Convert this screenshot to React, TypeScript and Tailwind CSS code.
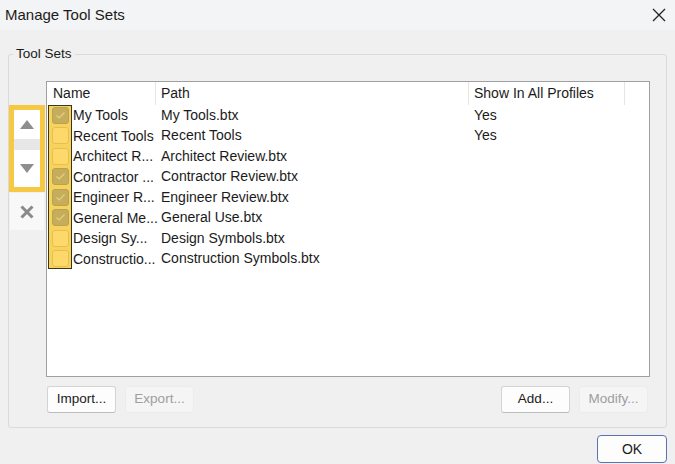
const rows = [
  { name: 'My Tools', path: 'My Tools.btx', show: 'Yes', checked: true },
  { name: 'Recent Tools', path: 'Recent Tools', show: 'Yes', checked: false },
  { name: 'Architect R...', path: 'Architect Review.btx', show: '', checked: false },
  { name: 'Contractor ...', path: 'Contractor Review.btx', show: '', checked: true },
  { name: 'Engineer R...', path: 'Engineer Review.btx', show: '', checked: true },
  { name: 'General Me...', path: 'General Use.btx', show: '', checked: true },
  { name: 'Design Sy...', path: 'Design Symbols.btx', show: '', checked: false },
  { name: 'Constructio...', path: 'Construction Symbols.btx', show: '', checked: false },
]

function Check({ checked }: { checked: boolean }) {
  if (checked) {
    return (
      <div className="w-[17px] h-[17px] rounded-[3px] bg-[#c5ad5c] border border-[#b9a153] flex items-center justify-center">
        <svg width="11" height="9" viewBox="0 0 11 9">
          <path d="M1.5 4.5 L4.2 7 L9.5 1.5" fill="none" stroke="#e3d184" strokeWidth="1.2" />
        </svg>
      </div>
    )
  }
  return <div className="w-[17px] h-[17px] rounded-[3px] bg-[#fdd96c] border border-[#e8bf4a]" />
}

function Btn({ label, disabled }: { label: string; disabled?: boolean }) {
  return (
    <div
      className={`w-[69px] h-[27px] rounded-[3px] flex items-center justify-center text-[13.5px] ${
        disabled
          ? 'bg-[#f5f5f5] border border-[#ececec] text-[#9e9e9e]'
          : 'bg-[#fdfdfd] border border-[#d3d3d3] border-b-[#bdbdbd] text-[#1b1b1b]'
      }`}
    >
      {label}
    </div>
  )
}

export default function App() {
  return (
    <div className="w-[675px] h-[464px] bg-[#f0f0f0] flex flex-col font-['Liberation_Sans',Arial,sans-serif] text-[#1b1b1b] overflow-hidden">
      {/* title bar */}
      <div className="h-[30px] shrink-0 bg-[#f3f4f5] flex items-center justify-between pl-[5px] pr-[9px]">
        <span className="text-[15px]">Manage Tool Sets</span>
        <svg width="14" height="14" viewBox="0 0 14 14">
          <path d="M1 1 L13 13 M13 1 L1 13" stroke="#222" strokeWidth="1.3" />
        </svg>
      </div>

      {/* group box */}
      <fieldset className="mt-[15px] mx-[8px] w-[659px] h-[383px] shrink-0 border border-[#dadada] rounded-[3px] pt-[18px] pr-[16px] flex">
        <legend className="ml-[4px] px-[3px] text-[13.5px] leading-[18px]">Tool Sets</legend>
        <div className="flex">
          {/* move / delete buttons */}
          <div className="w-[37px] flex flex-col pt-[24px]">
            <div className="w-[36px] h-[87px] border-[5px] border-[#f6c844] bg-[#e7e7e7] flex flex-col">
              <div className="h-[29px] bg-white flex items-center justify-center">
                <svg width="14" height="9" viewBox="0 0 14 9">
                  <path d="M7 0 L14 9 L0 9 Z" fill="#8e8e8e" />
                </svg>
              </div>
              <div className="h-[11px]" />
              <div className="flex-1 bg-white flex items-center justify-center">
                <svg width="14" height="9" viewBox="0 0 14 9">
                  <path d="M0 0 L14 0 L7 9 Z" fill="#8e8e8e" />
                </svg>
              </div>
            </div>
            <div className="ml-[1px] mt-[1px] w-[34px] h-[37px] bg-[#f8f8f8] flex items-center justify-center">
              <svg width="14" height="14" viewBox="0 0 14 14">
                <path d="M1.5 1.5 L12.5 12.5 M12.5 1.5 L1.5 12.5" stroke="#8a8a8a" strokeWidth="3" />
              </svg>
            </div>
          </div>

          <div className="flex flex-col">
            {/* list view */}
            <div className="w-[604px] h-[296px] bg-white border border-[#a0a0a0] text-[14px]">
              <div className="h-[23px] flex items-center">
                <div className="w-[109px] h-full pl-[6px] flex items-center border-r border-[#e5e5e5]">Name</div>
                <div className="w-[313px] h-full pl-[5px] flex items-center border-r border-[#e5e5e5]">Path</div>
                <div className="w-[156px] h-full pl-[5px] flex items-center border-r border-[#e5e5e5]">Show In All Profiles</div>
              </div>
              {rows.map((r, i) => (
                <div key={r.name} className="h-[20.5px] flex items-center">
                  <div className="w-[109px] h-full flex items-center">
                    <div
                      className={`ml-[1px] w-[24px] h-full bg-[#f7d35d] border-x border-[#3a361c] flex items-center justify-center ${
                        i === 0 ? 'border-t' : ''
                      } ${i === rows.length - 1 ? 'border-b' : ''}`}
                    >
                      <Check checked={r.checked} />
                    </div>
                    <div className="w-[84px] pl-[1px] whitespace-nowrap leading-[20px]">{r.name}</div>
                  </div>
                  <div className="w-[313px] pl-[5px] whitespace-nowrap">{r.path}</div>
                  <div className="w-[156px] pl-[5px]">{r.show}</div>
                </div>
              ))}
            </div>

            {/* list buttons */}
            <div className="mt-[9px] pl-[1px] pr-[2px] flex justify-between">
              <div className="flex gap-[9px]">
                <Btn label="Import..." />
                <Btn label="Export..." disabled />
              </div>
              <div className="flex gap-[9px]">
                <Btn label="Add..." />
                <Btn label="Modify..." disabled />
              </div>
            </div>
          </div>
        </div>
      </fieldset>

      <div className="mt-[7px] pr-[8px] flex justify-end">
        <div className="w-[70px] h-[28px] rounded-[4px] bg-[#fdfdfd] border border-[#5e6fb3] flex items-center justify-center text-[14px]">
          OK
        </div>
      </div>
    </div>
  )
}
